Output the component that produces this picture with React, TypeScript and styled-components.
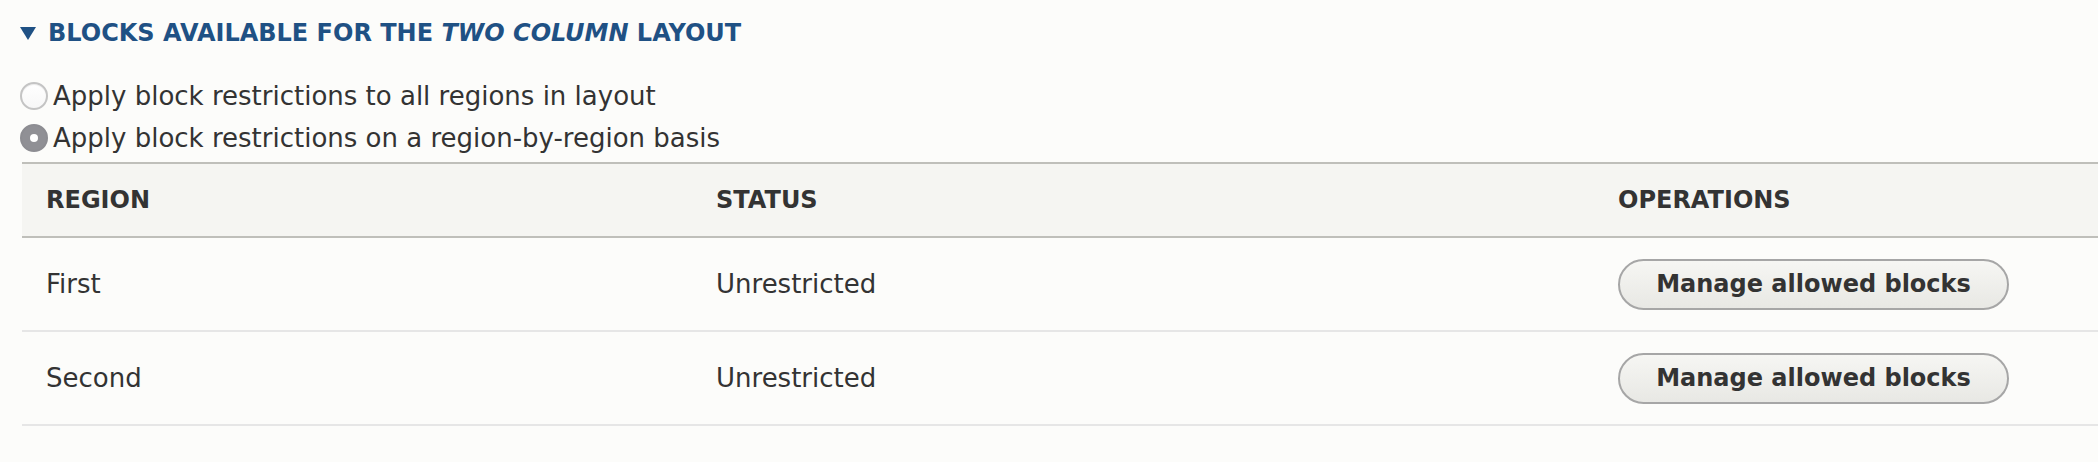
import React from "react";
import styled, { createGlobalStyle } from "styled-components";

const GlobalStyle = createGlobalStyle`
  html, body {
    margin: 0;
    padding: 0;
    background: #fcfcfa;
  }
  body {
    font-family: "DejaVu Sans", "Liberation Sans", sans-serif;
    color: #333;
    font-size: 26px;
  }
`;

type Region = {
  name: string;
  status: string;
};

const regions: Region[] = [
  { name: "First", status: "Unrestricted" },
  { name: "Second", status: "Unrestricted" },
];

const App: React.FC = (): JSX.Element => {
  return (
    <>
      <GlobalStyle />
      <Wrapper>
        <Summary>
          <Arrow />
          <SummaryText>
            Blocks available for the <em>Two column</em> layout
          </SummaryText>
        </Summary>
        <Options>
          <Option>
            <Radio />
            <Label>Apply block restrictions to all regions in layout</Label>
          </Option>
          <Option>
            <Radio checked />
            <Label>Apply block restrictions on a region-by-region basis</Label>
          </Option>
        </Options>
        <Table>
          <thead>
            <tr>
              <HeadCell width={670}>Region</HeadCell>
              <HeadCell width={902}>Status</HeadCell>
              <HeadCell>Operations</HeadCell>
            </tr>
          </thead>
          <tbody>
            {regions.map((r) => (
              <Row key={r.name}>
                <Cell>{r.name}</Cell>
                <Cell>{r.status}</Cell>
                <Cell>
                  <Button type="button">Manage allowed blocks</Button>
                </Cell>
              </Row>
            ))}
          </tbody>
        </Table>
      </Wrapper>
    </>
  );
};

const Wrapper = styled.div`
  padding-left: 20px;
`;

const Summary = styled.div`
  display: flex;
  align-items: center;
  height: 66px;
`;

const Arrow = styled.span`
  width: 0;
  height: 0;
  border-left: 8px solid transparent;
  border-right: 8px solid transparent;
  border-top: 13px solid #1f5184;
  margin-right: 12px;
  margin-top: 1px;
`;

const SummaryText = styled.span`
  color: #1f5184;
  font-weight: bold;
  text-transform: uppercase;
  font-size: 24px;

  em {
    font-style: italic;
  }
`;

const Options = styled.div`
  margin-top: 9px;
`;

const Option = styled.div`
  display: flex;
  align-items: center;
  height: 42px;
`;

const Radio = styled.span<{ checked?: boolean }>`
  box-sizing: border-box;
  width: 28px;
  height: 28px;
  border-radius: 50%;
  flex-shrink: 0;
  position: relative;
  border: 2px solid ${(p) => (p.checked ? "#8d8d92" : "#c4c4c4")};
  background: ${(p) =>
    p.checked ? "#909095" : "linear-gradient(#ffffff, #f7f7f7)"};
  box-shadow: ${(p) => (p.checked ? "none" : "inset 0 1px 1px rgba(0,0,0,0.08)")};

  &::after {
    content: "";
    display: ${(p) => (p.checked ? "block" : "none")};
    position: absolute;
    left: 50%;
    top: 50%;
    width: 8px;
    height: 8px;
    margin: -4px 0 0 -4px;
    border-radius: 50%;
    background: #fff;
  }
`;

const Label = styled.span`
  margin-left: 5px;
  font-size: 26px;
`;

const Table = styled.table`
  margin-top: 3px;
  margin-left: 2px;
  width: calc(100% - 2px);
  border-collapse: collapse;
  table-layout: fixed;
`;

const HeadCell = styled.th<{ width?: number }>`
  width: ${(p) => (p.width ? `${p.width}px` : "auto")};
  height: 74px;
  padding: 0 24px;
  box-sizing: border-box;
  text-align: left;
  text-transform: uppercase;
  font-weight: bold;
  font-size: 24px;
  background: #f5f5f2;
  border-top: 2px solid #bfbfba;
  border-bottom: 2px solid #bfbfba;
`;

const Row = styled.tr`
  border-bottom: 2px solid #e6e6e6;
`;

const Cell = styled.td`
  height: 94px;
  padding: 0 24px;
  box-sizing: border-box;
  font-size: 26px;
  vertical-align: middle;
`;

const Button = styled.button`
  box-sizing: border-box;
  width: 391px;
  height: 51px;
  border-radius: 26px;
  border: 2px solid #a6a6a6;
  background: linear-gradient(#f6f6f3, #e8e8e4);
  font-family: "DejaVu Sans", "Liberation Sans", sans-serif;
  font-weight: bold;
  font-size: 24px;
  color: #333;
  padding: 0;
  margin-left: 0;
  cursor: pointer;
`;

export default App;
